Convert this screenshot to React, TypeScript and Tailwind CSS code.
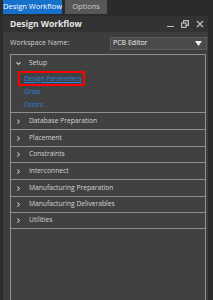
import { ChevronDown, ChevronRight } from 'lucide-react';

const sections = [
  { name: 'Database Preparation', h: 'h-[17px]' },
  { name: 'Placement', h: 'h-[17px]' },
  { name: 'Constraints', h: 'h-[16px]' },
  { name: 'Interconnect', h: 'h-[17px]' },
  { name: 'Manufacturing Preparation', h: 'h-[17px]' },
  { name: 'Manufacturing Deliverables', h: 'h-[16px]' },
  { name: 'Utilities', h: 'h-[16px]' },
];

function RestoreIcon() {
  return (
    <svg width="8" height="8" viewBox="0 0 8 8" fill="none" stroke="#bdbdbd" strokeWidth="1.2">
      <rect x="0.6" y="3" width="4.4" height="4.4" />
      <path d="M2.6 3V0.6H7.4V5.4H5" />
    </svg>
  );
}

export default function App() {
  return (
    <div className="w-[213px] h-[300px] bg-[#2b2b2b] flex flex-col overflow-hidden font-['Open_Sans',sans-serif] select-none">
      {/* tabs */}
      <div className="h-[14px] flex gap-[3px] pl-[3px]">
        <div className="w-[59px] bg-[#1670cc] text-white text-[7.5px] flex items-center justify-center">Design Workflow</div>
        <div className="w-[42px] bg-[#575757] text-[#cfcfcf] text-[7.5px] flex items-center justify-center">Options</div>
      </div>

      <div className="flex-1 flex flex-col mt-[2px] ml-[3px] mr-[5px]">
        {/* header */}
        <div className="h-[16px] bg-[#333333] flex items-center pl-[7px] pr-[4px]">
          <span className="text-[8.5px] font-bold text-[#e6e6e6] flex-1">Design Workflow</span>
          <div className="flex items-center gap-[7px] text-[#bdbdbd]">
            <div className="w-[7px] h-[1.5px] bg-[#bdbdbd] mt-[5px]" />
            <RestoreIcon />
            <svg width="8" height="8" viewBox="0 0 8 8" stroke="#bdbdbd" strokeWidth="1.4">
              <path d="M1 1L7 7M7 1L1 7" />
            </svg>
          </div>
        </div>

        {/* body */}
        <div className="flex-1 bg-[#3d3d3d] flex flex-col pl-[7px] pr-[2px] pt-[1px]">
          <div className="h-[20px] flex items-center">
            <span className="text-[7px] text-[#cfcfcf] w-[100px]">Workspace Name:</span>
            <div className="flex-1 h-[13px] bg-[#4a4a4a] border border-[#5c5c5c] flex items-center pl-[2px] pr-[4px] mr-[-1px]">
              <span className="text-[7px] text-[#ececec] flex-1">PCB Editor</span>
              <svg width="7" height="5" viewBox="0 0 7 5">
                <path d="M0 0H7L3.5 5Z" fill="#f0f0f0" />
              </svg>
            </div>
          </div>

          <div className="flex-1 mt-[1px] bg-[#414141] border-l border-r border-t border-[#8f8f8f] flex flex-col">
            {/* Setup */}
            <div className="h-[17px] flex items-center pl-[4px] text-[6.7px] text-[#d4d4d4]">
              <ChevronDown size={7} strokeWidth={3.5} className="text-[#d4d4d4] mr-[7px]" />
              Setup
            </div>
            <div className="h-[40px] flex flex-col pl-[13px] text-[6.5px] text-[#2b82dc]">
              <div className="h-[13px] flex items-center">
                <div className="h-[15px] border-2 border-[#ff0000] flex items-center pl-[4px] pr-[1px] ml-[-6px] whitespace-nowrap">
                  <span className="underline">Design Parameters</span>
                </div>
              </div>
              <div className="h-[13px] flex items-center">Grids</div>
              <div className="h-[13px] flex items-center">Colors</div>
            </div>

            {sections.map((s) => (
              <div key={s.name} className={`${s.h} border-t border-[#8f8f8f] flex items-center pl-[4px] text-[6.7px] text-[#d4d4d4] whitespace-nowrap`}>
                <ChevronRight size={7} strokeWidth={3.5} className="text-[#d4d4d4] mr-[7px]" />
                {s.name}
              </div>
            ))}
            <div className="border-t border-[#8f8f8f]" />
          </div>
        </div>
      </div>
    </div>
  );
}
